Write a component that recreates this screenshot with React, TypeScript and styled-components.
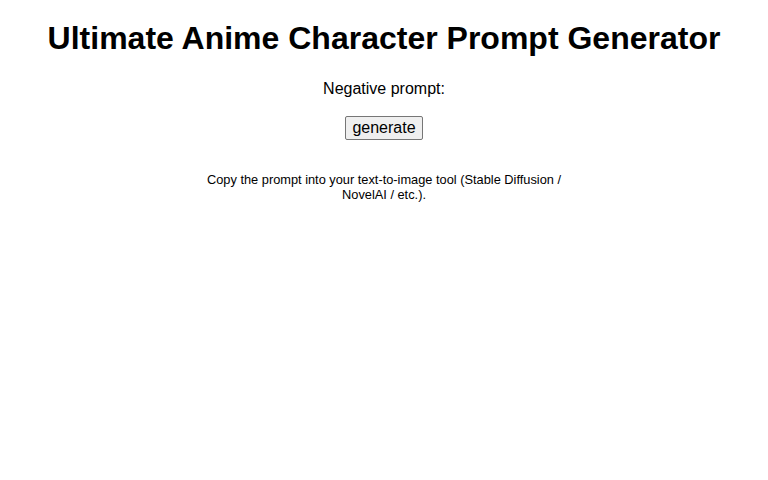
import styled, { createGlobalStyle } from 'styled-components';

const GlobalStyle = createGlobalStyle`
  body {
    margin: 8px;
    background: #ffffff;
    color: #000000;
    font-family: "Liberation Sans", Arial, sans-serif;
  }
`;

const Page = styled.main`
  display: flex;
  flex-direction: column;
  align-items: center;
  text-align: center;
`;

const Title = styled.h1`
  font-size: 32px;
  font-weight: bold;
  margin: 12px 0 23px;
  line-height: 37px;
`;

const FieldLabel = styled.div`
  font-size: 16px;
  line-height: 18px;
`;

const GenerateButton = styled.button`
  margin-top: 18px;
  font-family: "Liberation Sans", Arial, sans-serif;
  font-size: 16px;
  line-height: 18px;
  padding: 1px 6px;
  background: #efefef;
  border: 1px solid #767676;
  border-radius: 2px;
  color: #000;
  height: 24px;
`;

const Hint = styled.p`
  font-size: 12.8px;
  line-height: 15px;
  max-width: 360px;
  margin: 32px 0 0;
`;

const App = () => {
  return (
    <>
      <GlobalStyle />
      <Page>
        <Title>Ultimate Anime Character Prompt Generator</Title>
        <FieldLabel>Negative prompt:</FieldLabel>
        <GenerateButton>generate</GenerateButton>
        <Hint>Copy the prompt into your text-to-image tool (Stable Diffusion / NovelAI / etc.).</Hint>
      </Page>
    </>
  );
};

export default App;
